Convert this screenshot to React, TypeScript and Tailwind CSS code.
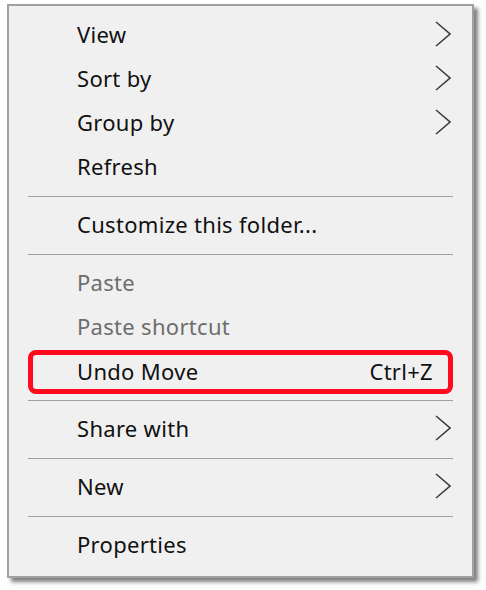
import React from 'react';

type Item =
  | { kind: 'item'; label: string; sub?: boolean; disabled?: boolean; shortcut?: string; marked?: boolean }
  | { kind: 'sep' };

const items: Item[] = [
  { kind: 'item', label: 'View', sub: true },
  { kind: 'item', label: 'Sort by', sub: true },
  { kind: 'item', label: 'Group by', sub: true },
  { kind: 'item', label: 'Refresh' },
  { kind: 'sep' },
  { kind: 'item', label: 'Customize this folder...' },
  { kind: 'sep' },
  { kind: 'item', label: 'Paste', disabled: true },
  { kind: 'item', label: 'Paste shortcut', disabled: true },
  { kind: 'item', label: 'Undo Move', shortcut: 'Ctrl+Z', marked: true },
  { kind: 'sep' },
  { kind: 'item', label: 'Share with', sub: true },
  { kind: 'sep' },
  { kind: 'item', label: 'New', sub: true },
  { kind: 'sep' },
  { kind: 'item', label: 'Properties' },
];

const Chevron = () => (
  <svg width="16" height="26" viewBox="0 0 16 26" className="shrink-0">
    <path d="M1 1 L15 13 L1 25" fill="none" stroke="#3a3a3a" strokeWidth="1.5" />
  </svg>
);

const App = () => {
  return (
    <div className="min-h-screen bg-white" style={{ fontFamily: '"Noto Sans", "Open Sans", sans-serif' }}>
      {/* context menu */}
      <div className="ml-[7px] mt-[4px] w-[467px] border-2 border-[#a0a0a0] bg-[#f0f0f0] px-[19px] py-[8px] shadow-[4px_4px_4px_rgba(0,0,0,0.5)]">
        {items.map((it, i) => {
          if (it.kind === 'sep') {
            return (
              <div key={i} className="pt-[6px] pb-[7px]">
                <div className="h-px bg-[#a0a0a0]" />
              </div>
            );
          }
          if (it.marked) {
            return (
              <div
                key={i}
                className="flex h-[44px] items-center justify-between rounded-[8px] border-[5px] border-[#ff0a1e] pb-[2px] pl-[44px] pr-[15px] text-[22px] tracking-[0.3px] text-[#111]"
              >
                <span>{it.label}</span>
                <span>{it.shortcut}</span>
              </div>
            );
          }
          return (
            <div
              key={i}
              className={`flex h-[44px] items-center justify-between pb-[4px] pl-[49px] pr-[2px] text-[22px] tracking-[0.3px] ${
                it.disabled ? 'text-[#6d6d6d]' : 'text-[#111]'
              }`}
            >
              <span>{it.label}</span>
              {it.sub && <Chevron />}
            </div>
          );
        })}
      </div>
    </div>
  );
};

export default App;
